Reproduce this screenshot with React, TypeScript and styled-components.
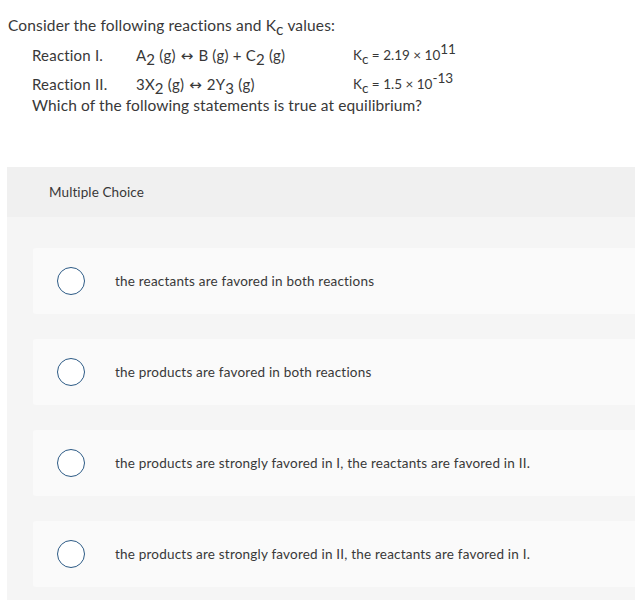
import styled, { createGlobalStyle } from "styled-components";

const GlobalStyle = createGlobalStyle`
  body {
    margin: 0;
    background: #ffffff;
    font-family: Lato, "Liberation Sans", sans-serif;
    color: #333333;
  }
`;

const options = [
  "the reactants are favored in both reactions",
  "the products are favored in both reactions",
  "the products are strongly favored in I, the reactants are favored in II.",
  "the products are strongly favored in II, the reactants are favored in I.",
];

const App = () => {
  return (
    <>
      <GlobalStyle />
      <Question>
        <Intro>
          Consider the following reactions and K<Sub>c</Sub> values:
        </Intro>
        <ReactionGrid>
          <span>Reaction I.</span>
          <span>
            A<Sub>2</Sub> (g) <Arrow>↔</Arrow> B (g) + C<Sub>2</Sub> (g)
          </span>
          <Constant>
            K<Sub>c</Sub> = 2.19 × 10<Sup>11</Sup>
          </Constant>
          <span>Reaction II.</span>
          <span>
            3X<Sub>2</Sub> (g) <Arrow>↔</Arrow> 2Y<Sub>3</Sub> (g)
          </span>
          <Constant>
            K<Sub>c</Sub> = 1.5 × 10<Sup>-13</Sup>
          </Constant>
        </ReactionGrid>
        <Prompt>Which of the following statements is true at equilibrium?</Prompt>
      </Question>

      <Panel>
        <PanelHeader>Multiple Choice</PanelHeader>
        <PanelBody>
          {options.map((text) => (
            <Choice key={text}>
              <Radio />
              <ChoiceText>{text}</ChoiceText>
            </Choice>
          ))}
        </PanelBody>
      </Panel>
    </>
  );
};

export default App;

const Question = styled.div`
  padding: 15px 0 0 8px;
  font-size: 15.5px;
  letter-spacing: 0.15px;
  line-height: 20px;
  color: #383838;
`;

const Intro = styled.div`
  margin-bottom: 10px;
`;

const ReactionGrid = styled.div`
  display: grid;
  grid-template-columns: 104px 217px auto;
  row-gap: 8px;
  padding-left: 24px;
  font-size: 15px;
  letter-spacing: 0.2px;
`;

const Constant = styled.span`
  font-size: 13.5px;
  letter-spacing: 0;
`;

const Sub = styled.span`
  line-height: 0;
  vertical-align: -4px;
`;

const Sup = styled.span`
  line-height: 0;
  vertical-align: 6px;
`;

const Arrow = styled.span`
  font-family: "DejaVu Sans", sans-serif;
  font-size: 1em;
  letter-spacing: 0;
  margin: 0 1px;
`;

const Prompt = styled.div`
  padding-left: 24px;
  letter-spacing: 0.1px;
`;

const Panel = styled.div`
  margin: 52px 0 0 7px;
`;

const PanelHeader = styled.div`
  height: 50px;
  background: #f0f0f0;
  padding-left: 42px;
  display: flex;
  align-items: center;
  font-size: 13.5px;
  letter-spacing: 0.1px;
  color: #383838;
`;

const PanelBody = styled.div`
  background: #f5f5f5;
  padding: 31px 0 13px 26px;
  display: flex;
  flex-direction: column;
  gap: 25px;
`;

const Choice = styled.div`
  height: 66px;
  background: #fafafa;
  border-radius: 3px 0 0 3px;
  display: flex;
  align-items: center;
  padding-left: 24px;
  gap: 30px;
`;

const Radio = styled.span`
  width: 26px;
  height: 26px;
  border: 1.5px solid #2c5a85;
  border-radius: 50%;
  background: #ffffff;
  flex-shrink: 0;
`;

const ChoiceText = styled.span`
  font-size: 13.5px;
  letter-spacing: 0.2px;
  color: #383838;
`;
